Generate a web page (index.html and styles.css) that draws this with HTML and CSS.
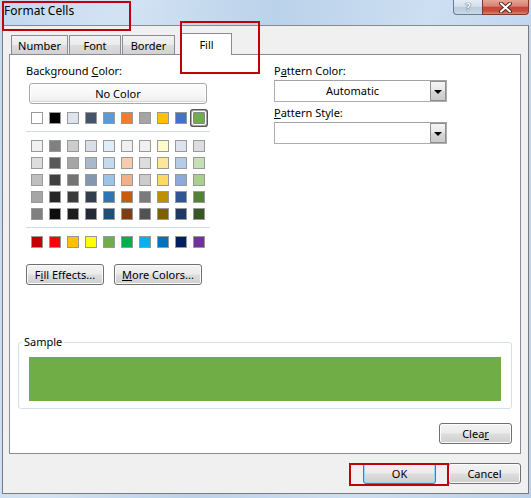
FILE: index.html
```html
<!DOCTYPE html>
<html>
<head>
<meta charset="utf-8">
<title>Format Cells</title>
<link rel="stylesheet" href="styles.css">
</head>
<body>
<div class="window">
  <div class="titlebar">
    <span class="title">Format Cells</span>
    <div class="caption">
      <div class="cap-btn help"><span class="qmark">?</span></div>
      <div class="cap-btn close">
        <svg width="17" height="11" viewBox="0 0 17 11">
          <path d="M4 1.5 L13 9.5 M13 1.5 L4 9.5" stroke="#5a2a22" stroke-width="4" stroke-linecap="round" fill="none"/>
          <path d="M4 1.5 L13 9.5 M13 1.5 L4 9.5" stroke="#ffffff" stroke-width="2" stroke-linecap="round" fill="none"/>
        </svg>
      </div>
    </div>
  </div>
  <div class="client">
    <div class="tabs">
      <div class="tab t-number">Number</div>
      <div class="tab t-font">Font</div>
      <div class="tab t-border">Border</div>
      <div class="tab t-fill active">Fill</div>
    </div>
    <div class="panel">
      <div class="columns">
        <div class="left">
          <div class="label">Background <u>C</u>olor:</div>
          <div class="btn nocolor">No Color</div>
          <div class="swatches theme">
            <span class="sw" style="background:#ffffff"></span>
            <span class="sw" style="background:#000000"></span>
            <span class="sw" style="background:#dde4ed"></span>
            <span class="sw" style="background:#44546a"></span>
            <span class="sw" style="background:#5b9bd5"></span>
            <span class="sw" style="background:#ed7d31"></span>
            <span class="sw" style="background:#a5a5a5"></span>
            <span class="sw" style="background:#ffc000"></span>
            <span class="sw" style="background:#4472c4"></span>
            <span class="sw selected" style="background:#70ad47"></span>
          </div>
          <div class="sep"></div>
          <div class="swatches tints">
            <span class="sw" style="background:#f0f0f0"></span>
            <span class="sw" style="background:#808080"></span>
            <span class="sw" style="background:#cccccc"></span>
            <span class="sw" style="background:#d8dee6"></span>
            <span class="sw" style="background:#e0ecf8"></span>
            <span class="sw" style="background:#f0f0f0"></span>
            <span class="sw" style="background:#f0f0f0"></span>
            <span class="sw" style="background:#fffac8"></span>
            <span class="sw" style="background:#dde3ee"></span>
            <span class="sw" style="background:#dddddd"></span>

            <span class="sw" style="background:#dddddd"></span>
            <span class="sw" style="background:#595959"></span>
            <span class="sw" style="background:#a6a6a6"></span>
            <span class="sw" style="background:#a9b8cb"></span>
            <span class="sw" style="background:#c4daef"></span>
            <span class="sw" style="background:#f8cbad"></span>
            <span class="sw" style="background:#dddddd"></span>
            <span class="sw" style="background:#ffe699"></span>
            <span class="sw" style="background:#b4cce8"></span>
            <span class="sw" style="background:#c6e0b4"></span>

            <span class="sw" style="background:#bfbfbf"></span>
            <span class="sw" style="background:#404040"></span>
            <span class="sw" style="background:#747474"></span>
            <span class="sw" style="background:#8497b0"></span>
            <span class="sw" style="background:#9dc3e6"></span>
            <span class="sw" style="background:#f4b084"></span>
            <span class="sw" style="background:#cccccc"></span>
            <span class="sw" style="background:#ffd966"></span>
            <span class="sw" style="background:#8eaadb"></span>
            <span class="sw" style="background:#a9d08e"></span>

            <span class="sw" style="background:#a6a6a6"></span>
            <span class="sw" style="background:#262626"></span>
            <span class="sw" style="background:#3a3a3a"></span>
            <span class="sw" style="background:#333f4f"></span>
            <span class="sw" style="background:#2e75b6"></span>
            <span class="sw" style="background:#c55a11"></span>
            <span class="sw" style="background:#7b7b7b"></span>
            <span class="sw" style="background:#bf8f00"></span>
            <span class="sw" style="background:#2f5597"></span>
            <span class="sw" style="background:#548235"></span>

            <span class="sw" style="background:#808080"></span>
            <span class="sw" style="background:#0d0d0d"></span>
            <span class="sw" style="background:#1c1c1c"></span>
            <span class="sw" style="background:#222a35"></span>
            <span class="sw" style="background:#1f4e79"></span>
            <span class="sw" style="background:#843c0c"></span>
            <span class="sw" style="background:#525252"></span>
            <span class="sw" style="background:#7f6000"></span>
            <span class="sw" style="background:#203864"></span>
            <span class="sw" style="background:#375623"></span>
          </div>
          <div class="sep"></div>
          <div class="swatches standard">
            <span class="sw" style="background:#c00000"></span>
            <span class="sw" style="background:#ff0000"></span>
            <span class="sw" style="background:#ffc000"></span>
            <span class="sw" style="background:#ffff00"></span>
            <span class="sw" style="background:#72ad47"></span>
            <span class="sw" style="background:#00b050"></span>
            <span class="sw" style="background:#00b0f0"></span>
            <span class="sw" style="background:#0070c0"></span>
            <span class="sw" style="background:#002060"></span>
            <span class="sw" style="background:#7030a0"></span>
          </div>
          <div class="btn-row">
            <div class="btn fx">F<u>i</u>ll Effects...</div>
            <div class="btn more"><u>M</u>ore Colors...</div>
          </div>
        </div>
        <div class="right">
          <div class="label">P<u>a</u>ttern Color:</div>
          <div class="combo"><span class="combo-text">Automatic</span><span class="drop"><span class="arrow"></span></span></div>
          <div class="label label2"><u>P</u>attern Style:</div>
          <div class="combo"><span class="combo-text"></span><span class="drop"><span class="arrow"></span></span></div>
        </div>
      </div>
      <fieldset class="sample">
        <legend>Sample</legend>
        <div class="preview"></div>
      </fieldset>
      <div class="clear-row"><div class="btn clear">Clea<u>r</u></div></div>
    </div>
    <div class="footer">
      <div class="btn ok">OK</div>
      <div class="btn cancel">Cancel</div>
    </div>
  </div>
  <div class="mark mark-title"></div>
  <div class="mark mark-fill"></div>
  <div class="mark mark-ok"></div>
</div>
</body>
</html>
```
FILE: styles.css
```css
* { box-sizing: border-box; }
html, body { margin: 0; padding: 0; }
body {
  width: 531px;
  height: 498px;
  overflow: hidden;
  font-family: "Noto Sans", "Open Sans", sans-serif;
  font-size: 11px;
  color: #000;
}
u { text-decoration: underline; text-underline-offset: 1px; }

.window {
  position: relative;
  width: 531px;
  height: 498px;
  display: flex;
  flex-direction: column;
  padding: 0 2px 4px 2px;
  background: linear-gradient(100deg, #c3d8ee 0%, #d3e3f4 20%, #bad2ea 45%, #cddff2 70%, #b9d1ea 100%);
}

.titlebar {
  height: 25px;
  display: flex;
  align-items: flex-start;
  flex: none;
}
.title {
  font-size: 12px;
  line-height: 14px;
  margin: 4px 0 0 2px;
  color: #000;
}
.caption { margin-left: auto; display: flex; }
.cap-btn {
  height: 15px;
  display: flex;
  align-items: center;
  justify-content: center;
  border: 1px solid #6b7c90;
  border-top: none;
}
.help {
  width: 29px;
  border-radius: 0 0 0 4px;
  border-right: none;
  background: linear-gradient(#e4edf6 0%, #cfdcea 50%, #b9cbdd 51%, #c8d8e8 100%);
}
.qmark {
  font-size: 11px;
  line-height: 14px;
  height: 14px;
  font-weight: bold;
  color: #fff;
  text-shadow: 0 0 1px #44505e, 0 0 1px #44505e;
}
.close {
  width: 47px;
  border-radius: 0 0 4px 0;
  border-color: #7a3a32;
  background: linear-gradient(#e6a597 0%, #d88070 45%, #c4463a 50%, #c8503f 80%, #dc8a6c 100%);
}

.client {
  flex: 1;
  display: flex;
  flex-direction: column;
  border: 1px solid #7b7b7b;
  border-top-color: #8a8a8a;
  background: #f0f0f0;
  padding: 7px 7px 0 6px;
}

.tabs {
  height: 21px;
  display: flex;
  align-items: flex-end;
  padding-left: 2px;
  position: relative;
  z-index: 2;
  flex: none;
}
.tab {
  height: 19px;
  display: flex;
  align-items: center;
  justify-content: center;
  padding-top: 1px;
  margin-right: 1px;
  border: 1px solid #898c95;
  border-bottom: none;
  background: linear-gradient(#f2f2f2 0%, #ebebeb 50%, #dddddd 51%, #d2d2d2 100%);
}
.t-number { width: 57px; }
.t-font { width: 52px; }
.t-border { width: 53px; }
.tab.active {
  width: 51px;
  height: 22px;
  margin-left: 5px;
  margin-bottom: -1px;
  padding-top: 0;
  padding-bottom: 1px;
  background: #fff;
}

.panel {
  height: 400px;
  flex: none;
  border: 1px solid #898c95;
  background: #fff;
  padding: 9px 0 0 8px;
  position: relative;
  z-index: 1;
}

.columns {
  display: grid;
  grid-template-columns: 184px 173px;
  column-gap: 64px;
  margin-left: 8px;
  align-items: start;
}
.left, .right { display: flex; flex-direction: column; }
.label { line-height: 14px; height: 14px; white-space: nowrap; }

.btn {
  display: flex;
  align-items: center;
  justify-content: center;
  height: 21px;
  border: 1px solid #707070;
  border-radius: 3px;
  background: linear-gradient(#f3f3f3 0%, #ebebeb 48%, #dddddd 52%, #cfcfcf 100%);
  box-shadow: inset 0 0 0 1px #fbfbfb;
  white-space: nowrap;
  line-height: 14px;
}
.nocolor {
  margin: 5px 0 0 3px;
  width: 178px;
  border-color: #a8a8a8;
  background: linear-gradient(#fdfdfd 0%, #f6f6f6 60%, #ebebeb 100%);
  box-shadow: inset 0 0 0 1px #ffffff, inset 0 -2px 0 0 #d8d8d8;
}

.swatches {
  display: grid;
  grid-template-columns: repeat(10, 12px);
  column-gap: 6px;
  row-gap: 5px;
  margin-left: 5px;
}
.theme { margin-top: 8px; }
.tints { margin-top: 8px; }
.standard { margin-top: 8px; }
.sw {
  display: block;
  width: 12px;
  height: 12px;
  border: 1px solid #999999;
}
.sw.selected {
  border-color: #888;
  border-radius: 1px;
  box-shadow: 0 0 0 1px #ffffff, 0 0 0 2px #a9a9a9, 0 0 0 3px #555555;
}
.sep {
  height: 1px;
  margin-top: 7px;
  background: #d3dde7;
}

.btn-row {
  display: flex;
  gap: 10px;
  margin-top: 16px;
}
.fx { width: 78px; }
.more { width: 88px; }

.combo {
  display: flex;
  height: 22px;
  margin-top: 2px;
  border: 1px solid #abadb3;
  border-top-color: #a0a2a8;
  background: #fff;
}
.combo-text {
  flex: 1;
  display: flex;
  align-items: center;
  justify-content: center;
  line-height: 14px;
}
.drop {
  width: 16px;
  display: flex;
  align-items: center;
  justify-content: center;
  border: 1px solid #8e8f8f;
  background: linear-gradient(#f4f4f4 0%, #e6e6e6 50%, #d6d6d6 51%, #cbcbcb 100%);
}
.arrow {
  width: 0;
  height: 0;
  border-left: 4px solid transparent;
  border-right: 4px solid transparent;
  border-top: 4px solid #000;
  margin-top: 1px;
}
.label2 { margin-top: 4px; }

.sample {
  margin: 50px 0 0 0;
  width: 494px;
  padding: 8px 10px 7px 10px;
  border: 1px solid #d5dfe5;
  border-radius: 3px;
  min-inline-size: 0;
}
.sample legend {
  padding: 0 2px;
  margin-left: -7px;
  line-height: 14px;
  font-size: 11px;
}
.preview {
  height: 44px;
  background: #70ad47;
}

.clear-row {
  display: flex;
  justify-content: flex-end;
  margin-top: 14px;
  padding-right: 8px;
}
.clear { width: 73px; }

.footer {
  display: flex;
  justify-content: flex-end;
  gap: 12px;
  margin-top: 9px;
}
.ok, .cancel { width: 73px; }
.ok {
  border-color: #3c7fb1;
  box-shadow: inset 0 0 0 1px #8fdcf8;
}

.mark {
  position: absolute;
  border: 2px solid #c0000a;
  pointer-events: none;
  z-index: 5;
}
.mark-title { left: 2px; top: 1px; width: 129px; height: 30px; }
.mark-fill { left: 180px; top: 21px; width: 80px; height: 53px; }
.mark-ok { left: 349px; top: 463px; width: 100px; height: 23px; }
```
